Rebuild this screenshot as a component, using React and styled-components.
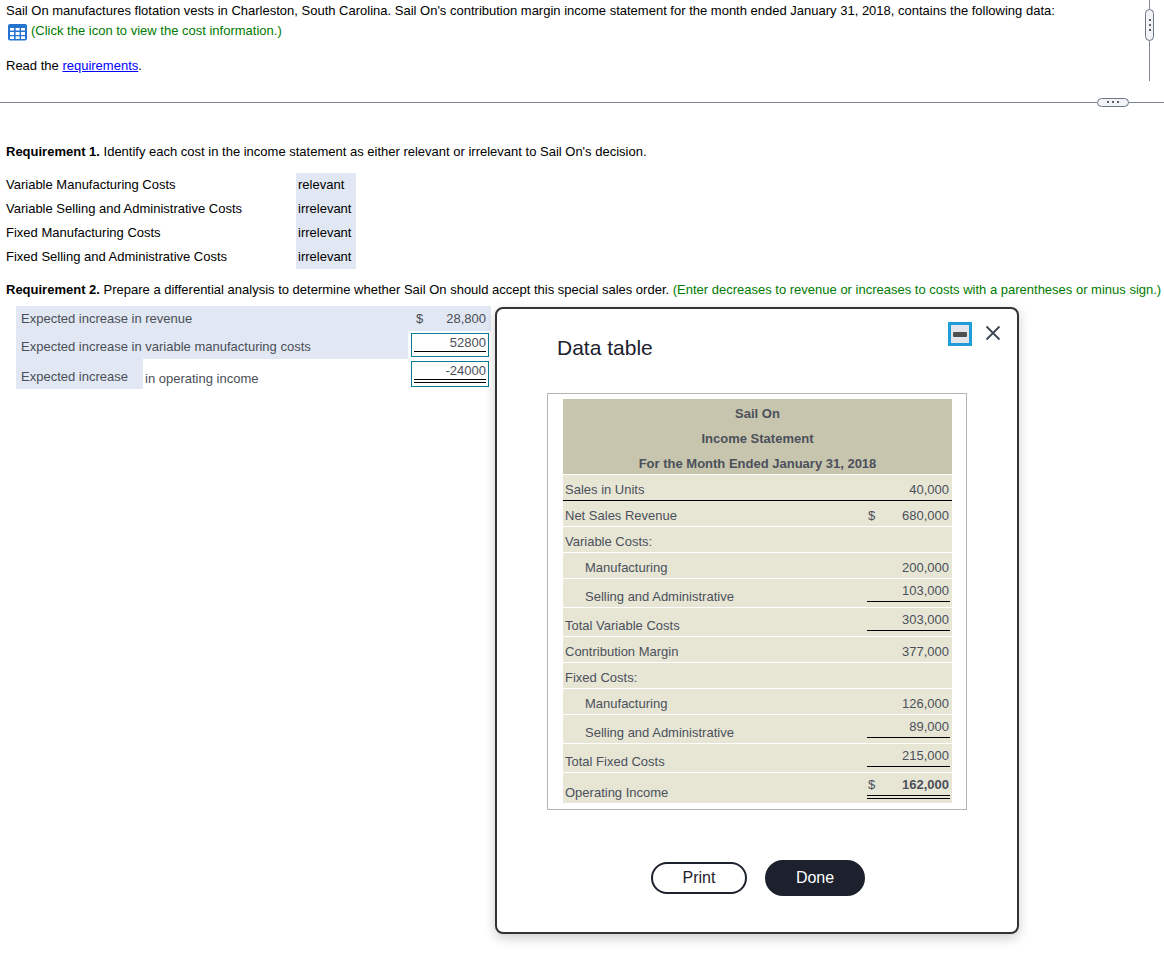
import React, { useState } from "react";
import styled, { createGlobalStyle, css } from "styled-components";

const GlobalStyle = createGlobalStyle`
  * {
    box-sizing: border-box;
  }
  body {
    margin: 0;
    background: #fff;
    color: #000;
    font: 13px/20px "Liberation Sans", Arial, sans-serif;
  }
  p, h1, h2 {
    margin: 0;
    font-size: inherit;
    font-weight: normal;
  }
  button, input {
    font-family: inherit;
  }
`;

const costs = [
  { id: "vm", label: "Variable Manufacturing Costs", answer: "relevant" },
  { id: "vs", label: "Variable Selling and Administrative Costs", answer: "irrelevant" },
  { id: "fm", label: "Fixed Manufacturing Costs", answer: "irrelevant" },
  { id: "fs", label: "Fixed Selling and Administrative Costs", answer: "irrelevant" },
];

const statement = [
  { label: "Sales in Units", amount: "40,000", line: true },
  { label: "Net Sales Revenue", amount: "680,000", dollar: true },
  { label: "Variable Costs:" },
  { label: "Manufacturing", amount: "200,000", indent: true },
  { label: "Selling and Administrative", amount: "103,000", indent: true, rule: "single" },
  { label: "Total Variable Costs", amount: "303,000", rule: "single" },
  { label: "Contribution Margin", amount: "377,000" },
  { label: "Fixed Costs:" },
  { label: "Manufacturing", amount: "126,000", indent: true },
  { label: "Selling and Administrative", amount: "89,000", indent: true, rule: "single" },
  { label: "Total Fixed Costs", amount: "215,000", rule: "single" },
  { label: "Operating Income", amount: "162,000", dollar: true, bold: true, rule: "double" },
];

// Intro
const Intro = styled.header`
  display: flex;
  justify-content: space-between;
  padding: 0 10px 0 6px;
`;

const IntroText = styled.div`
  padding: 1px 0 5px;
`;

const IconLine = styled.div`
  display: flex;
  align-items: center;
  gap: 4px;
  height: 19px;
  padding-left: 2px;
  margin-bottom: 16px;
`;

const IconButton = styled.button`
  display: flex;
  padding: 4px 0 0;
  border: 0;
  background: none;
  cursor: pointer;
`;

const Green = styled.span`
  color: #007a00;
`;

const Link = styled.a`
  color: #0000ff;
`;

// Splitters
const line = "#7f8694";

const VerticalSplitter = styled.div`
  display: flex;
  flex-direction: column;
  align-items: center;
  width: 9px;
`;

const HorizontalSplitter = styled.div`
  display: flex;
  align-items: center;
  height: 10px;
  margin-top: 16px;
`;

const Line = styled.span`
  flex: ${(props) => (props.$size ? `0 0 ${props.$size}px` : "1")};
  background: ${line};
  ${(props) => (props.$vertical ? "width: 1px;" : "height: 1px;")}
`;

const Grip = styled.button`
  display: flex;
  flex-direction: ${(props) => (props.$vertical ? "column" : "row")};
  align-items: center;
  justify-content: center;
  gap: 3px;
  width: ${(props) => (props.$vertical ? 9 : 32)}px;
  height: ${(props) => (props.$vertical ? 32 : 9)}px;
  padding: 0;
  border: 1px solid #6d7686;
  border-radius: 5px;
  background: #f1f3f7;
`;

const Dot = styled.i`
  width: 2px;
  height: 2px;
  background: #5c6069;
`;

// Worksheet
const Main = styled.main`
  padding-top: 35px;
`;

const Requirement = styled.p`
  padding-left: 6px;
  white-space: nowrap;
`;

const CostTable = styled.table`
  margin: 11px 0 11px 6px;
  border-collapse: collapse;

  th {
    width: 290px;
    padding: 0;
    font-weight: normal;
    text-align: left;
    line-height: 24px;
  }
  td {
    width: 60px;
    padding: 0 2px;
    background: #e1e8f3;
    line-height: 24px;
  }
`;

const Workspace = styled.div`
  position: relative;
  min-height: 649px;
  padding: 6px 0 0 16px;
`;

const Analysis = styled.div`
  width: 475px;
  color: #4a4e57;
`;

const AnalysisRow = styled.div`
  display: flex;
  justify-content: space-between;
  height: ${(props) => props.$height}px;
`;

const AnalysisLabel = styled.label`
  ${(props) => props.$grow && "flex: 1;"}
  width: ${(props) => (props.$half ? "127px" : "auto")};
  padding: ${(props) => props.$top}px 5px 0;
  background: #e1e8f3;
`;

const LabelRest = styled.span`
  flex: 1;
  padding: 10px 2px 0;
`;

const Given = styled.div`
  display: flex;
  justify-content: space-between;
  width: 83px;
  padding: 3px 5px 0 8px;
  background: #e1e8f3;
`;

const AnswerCell = styled.div`
  width: 83px;
  padding: 2px 2px 0 3px;
`;

const AnswerBox = styled.div`
  padding: 1px 2px ${(props) => (props.$rule === "double" ? 3 : 4)}px;
  border: 1px solid #0b7a99;
`;

const Rule = css`
  border-bottom: ${(props) => (props.$rule === "double" ? "4px double #000" : "1px solid #000")};
`;

const AnswerInput = styled.input`
  display: block;
  width: 100%;
  height: ${(props) => (props.$rule === "double" ? 20 : 17)}px;
  padding: 0 0 1px;
  border: 0;
  ${Rule}
  background: transparent;
  color: #4a4e57;
  font-size: 13px;
  text-align: right;
  outline: none;
`;

// Dialog
const Dialog = styled.section`
  position: absolute;
  top: 7px;
  left: 495px;
  width: 524px;
  padding-bottom: 36px;
  border: 2px solid #333;
  border-radius: 8px;
  background: #fff;
  box-shadow: 0 4px 12px rgba(0, 0, 0, 0.2);
`;

const DialogHeader = styled.div`
  display: flex;
  justify-content: space-between;
  padding: 13px 16px 0 60px;
`;

const DialogTitle = styled.h2`
  padding-top: 14px;
  font-size: 21px;
  line-height: 24px;
  color: #1c212d;
`;

const DialogTools = styled.div`
  display: flex;
  align-items: center;
  gap: 13px;
  height: 24px;
`;

const MinimizeButton = styled.button`
  display: flex;
  align-items: center;
  justify-content: center;
  width: 24px;
  height: 24px;
  padding: 0;
  border: 3px solid #1f9cda;
  background: #e2e5ea;
`;

const Dash = styled.span`
  width: 14px;
  height: 5px;
  border-radius: 1px;
  background: #505050;
`;

const CloseButton = styled.button`
  display: flex;
  padding: 0 0 2px;
  border: 0;
  background: none;
`;

const Frame = styled.div`
  margin: 33px 50px 50px;
  padding: 5px 14px 6px 15px;
  border: 1px solid #b5b5b5;
`;

const Statement = styled.table`
  width: 100%;
  border-collapse: separate;
  border-spacing: 0;
  color: #4b505b;
  line-height: 16px;

  caption {
    border-bottom: 1px solid #fff;
    background: #c7c5ad;
    font-weight: bold;
  }
  caption span {
    display: block;
    padding-top: 4px;
    line-height: 21px;
  }
`;

const Row = styled.tr`
  th, td {
    border-bottom: 1px solid ${(props) => (props.$line ? "#000" : "#fff")};
    background: #e7e6d5;
  }
  &:last-child th, &:last-child td {
    border-bottom: 0;
  }
`;

const Label = styled.th`
  padding: 7px 2px 2px ${(props) => (props.$indent ? 22 : 2)}px;
  font-weight: normal;
  text-align: left;
  vertical-align: bottom;
`;

const AmountCell = styled.td`
  width: 85px;
  padding: ${(props) => (props.$rule ? "4px 2px 4px 0" : "7px 2px 2px 0")};
  vertical-align: top;
`;

const Amount = styled.div`
  display: flex;
  justify-content: space-between;
  padding: 0 1px;
  ${(props) => props.$rule && css`
    padding-bottom: 2px;
    margin-bottom: ${props.$rule === "double" ? 0 : "1px"};
    ${Rule}
  `}
`;

const Actions = styled.div`
  display: flex;
  align-items: center;
  justify-content: center;
  gap: 18px;
  padding-left: 2px;
`;

const PillButton = styled.button`
  width: ${(props) => (props.$primary ? 100 : 96)}px;
  height: ${(props) => (props.$primary ? 36 : 32)}px;
  padding: 0;
  border: 2px solid #1c212d;
  border-radius: 18px;
  background: ${(props) => (props.$primary ? "#1c212d" : "#fff")};
  color: ${(props) => (props.$primary ? "#fff" : "#1c212d")};
  font-size: 16px;
`;

const TableIcon = () => (
  <svg width="19" height="17" viewBox="0 0 19 17" aria-hidden="true">
    <rect width="19" height="16.5" rx="2" fill="#2474cf" />
    <path
      fill="#fff"
      d="M2 4h4v2.6H2zM7.6 4h4v2.6h-4zM13 4h4v2.6h-4zM2 8h4v3H2zM7.6 8h4v3h-4zM13 8h4v3h-4zM2 12.2h4v2.8H2zM7.6 12.2h4v2.8h-4zM13 12.2h4v2.8h-4z"
    />
  </svg>
);

const CloseIcon = () => (
  <svg width="16" height="16" viewBox="0 0 16 16" aria-hidden="true">
    <path d="M1.5 1.5 14.5 14.5M14.5 1.5 1.5 14.5" stroke="#3d4754" strokeWidth="1.8" />
  </svg>
);

const Dots = () => (
  <>
    <Dot />
    <Dot />
    <Dot />
  </>
);

const DataTableDialog = ({ onClose }) => (
  <Dialog role="dialog" aria-labelledby="dialog-title">
    <DialogHeader>
      <DialogTitle id="dialog-title">Data table</DialogTitle>
      <DialogTools>
        <MinimizeButton type="button" aria-label="Minimize"><Dash /></MinimizeButton>
        <CloseButton type="button" aria-label="Close" onClick={onClose}><CloseIcon /></CloseButton>
      </DialogTools>
    </DialogHeader>
    <Frame>
      <Statement>
        <caption>
          <span>Sail On</span>
          <span>Income Statement</span>
          <span>For the Month Ended January 31, 2018</span>
        </caption>
        <tbody>
          {statement.map((row, i) => (
            <Row key={i} $line={row.line}>
              <Label scope="row" $indent={row.indent}>{row.label}</Label>
              <AmountCell $rule={row.rule}>
                {row.amount && (
                  <Amount $rule={row.rule}>
                    <span>{row.dollar && "$"}</span>
                    {row.bold ? <strong>{row.amount}</strong> : <span>{row.amount}</span>}
                  </Amount>
                )}
              </AmountCell>
            </Row>
          ))}
        </tbody>
      </Statement>
    </Frame>
    <Actions>
      <PillButton type="button" onClick={() => window.print()}>Print</PillButton>
      <PillButton type="button" $primary onClick={onClose}>Done</PillButton>
    </Actions>
  </Dialog>
);

const App = () => {
  const [open, setOpen] = useState(true);
  const [costIncrease, setCostIncrease] = useState("52800");
  const [incomeIncrease, setIncomeIncrease] = useState("-24000");

  return (
    <>
      <GlobalStyle />
      <Intro>
        <IntroText>
          <p>
            Sail On manufactures flotation vests in Charleston, South Carolina. Sail On's contribution
            margin income statement for the month ended January 31, 2018, contains the following data:
          </p>
          <IconLine>
            <IconButton type="button" aria-label="Cost information" onClick={() => setOpen(true)}>
              <TableIcon />
            </IconButton>
            <Green>(Click the icon to view the cost information.)</Green>
          </IconLine>
          <p>Read the <Link href="#requirements">requirements</Link>.</p>
        </IntroText>
        <VerticalSplitter>
          <Line $vertical $size={9} />
          <Grip type="button" $vertical aria-label="Resize columns"><Dots /></Grip>
          <Line $vertical />
        </VerticalSplitter>
      </Intro>
      <HorizontalSplitter>
        <Line />
        <Grip type="button" aria-label="Resize rows"><Dots /></Grip>
        <Line $size={35} />
      </HorizontalSplitter>

      <Main>
        <Requirement id="requirements">
          <strong>Requirement 1.</strong> Identify each cost in the income statement as either relevant
          or irrelevant to Sail On's decision.
        </Requirement>
        <CostTable>
          <tbody>
            {costs.map((cost) => (
              <tr key={cost.id}>
                <th scope="row">{cost.label}</th>
                <td>{cost.answer}</td>
              </tr>
            ))}
          </tbody>
        </CostTable>

        <Requirement>
          <strong>Requirement 2.</strong> Prepare a differential analysis to determine whether Sail On
          should accept this special sales order.{" "}
          <Green>(Enter decreases to revenue or increases to costs with a parentheses or minus sign.)</Green>
        </Requirement>
        <Workspace>
          <Analysis>
            <AnalysisRow $height={25}>
              <AnalysisLabel as="span" $grow $top={3}>Expected increase in revenue</AnalysisLabel>
              <Given><span>$</span><span>28,800</span></Given>
            </AnalysisRow>
            <AnalysisRow $height={28}>
              <AnalysisLabel htmlFor="cost-increase" $grow $top={6}>
                Expected increase in variable manufacturing costs
              </AnalysisLabel>
              <AnswerCell>
                <AnswerBox>
                  <AnswerInput
                    id="cost-increase"
                    value={costIncrease}
                    onChange={(e) => setCostIncrease(e.target.value)}
                  />
                </AnswerBox>
              </AnswerCell>
            </AnalysisRow>
            <AnalysisRow $height={30}>
              <AnalysisLabel htmlFor="income-increase" $half $top={8}>Expected increase</AnalysisLabel>
              <LabelRest>in operating income</LabelRest>
              <AnswerCell>
                <AnswerBox $rule="double">
                  <AnswerInput
                    id="income-increase"
                    $rule="double"
                    value={incomeIncrease}
                    onChange={(e) => setIncomeIncrease(e.target.value)}
                  />
                </AnswerBox>
              </AnswerCell>
            </AnalysisRow>
          </Analysis>
          {open && <DataTableDialog onClose={() => setOpen(false)} />}
        </Workspace>
      </Main>
    </>
  );
};

export default App;
